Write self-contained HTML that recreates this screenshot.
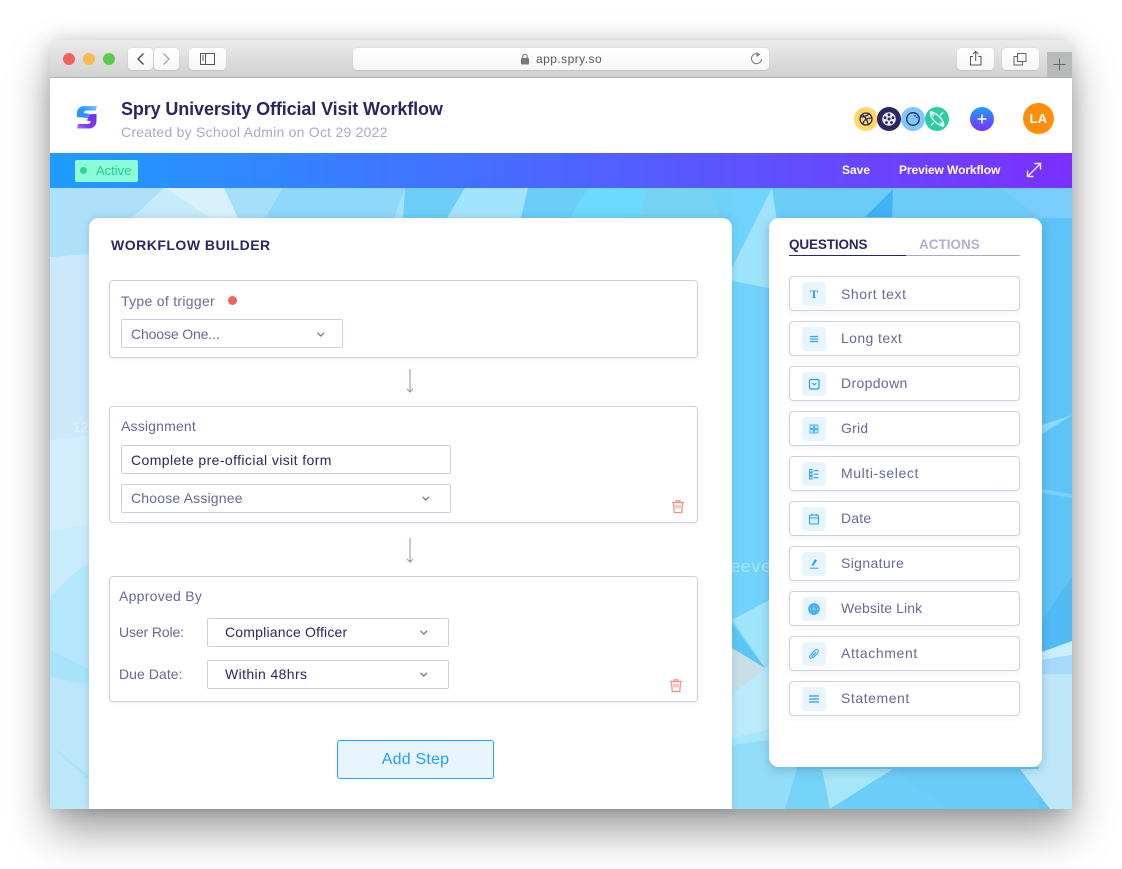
<!DOCTYPE html>
<html lang="en"><head><meta charset="utf-8"><title>Spry</title>
<style>
html,body{margin:0;padding:0;background:#fff}
body{width:1122px;height:869px;overflow:hidden;position:relative;font-family:"Liberation Sans",sans-serif}
.t{position:absolute;white-space:nowrap;line-height:20px;height:20px}
.win{position:absolute;left:50px;top:40px;width:1022px;height:769px;border-radius:6px;box-shadow:0 22px 44px rgba(0,0,0,.38),0 0 18px rgba(0,0,0,.14)}
.abs{position:absolute}
.tb{position:absolute;left:50px;top:40px;width:1022px;height:38px;background:linear-gradient(#ebebeb,#d1d1d1);border-radius:6px 6px 0 0;border-bottom:1px solid #b0b0b0;box-sizing:border-box;overflow:hidden}
.dot{position:absolute;width:12px;height:12px;border-radius:50%;top:53px}
.btn{position:absolute;top:48px;height:22px;background:linear-gradient(#fff,#f6f6f6);border-radius:4px;box-shadow:0 0 1px rgba(0,0,0,.2),0 1px 0 rgba(0,0,0,.06)}
.box{position:absolute;left:109px;width:589px;box-sizing:border-box;border:1px solid #cfcfe2;border-radius:4px;background:#fff;box-shadow:0 2px 5px rgba(60,60,120,.06)}
.sel{position:absolute;box-sizing:border-box;border:1px solid #cfcfe2;border-radius:2px;background:#fff;height:29px}
.lab{font-size:14px;color:#666a96;letter-spacing:.18px}
.dark{font-size:14px;color:#2a2760;letter-spacing:.25px}
.item{position:absolute;left:789px;width:231px;height:35px;box-sizing:border-box;border:1px solid #cfcfe2;border-radius:4px;background:#fff;box-shadow:0 3px 6px rgba(60,60,120,.04)}
.ic{position:absolute;left:802px;width:24px;height:24px;border-radius:4px;background:#e8f5ff}
.it{left:841px;font-size:14px;color:#666a96;letter-spacing:.36px}
svg{display:block}
</style></head><body>
<div class="win"></div>

<!-- low-poly background -->
<svg class="abs" style="left:50px;top:188px" width="1022" height="621" viewBox="50 188 1022 621">
<defs><linearGradient id="bg" x1="0" y1="0" x2="1" y2="0"><stop offset="0" stop-color="#b9e6fb"/><stop offset=".2" stop-color="#9fdffa"/><stop offset=".6" stop-color="#74d8fb"/><stop offset="1" stop-color="#5fc4f7"/></linearGradient></defs>
<rect x="50" y="188" width="1022" height="621" fill="url(#bg)"/>
<polygon points="50,188 164,188 132,220 90,260 50,257" fill="#aee0f9"/>
<polygon points="50,257 140,250 120,480 50,440" fill="#cbe9fb"/>
<polygon points="50,440 140,430 130,530 50,530" fill="#d2eefc"/>
<polygon points="50,530 130,520 132,566 82,566 50,597" fill="#c8ecfc"/>
<polygon points="50,597 82,566 130,600 130,690 50,650" fill="#b4e7fc"/>
<polygon points="50,650 130,690 50,677" fill="#a8e4f9"/>
<polygon points="50,677 130,700 130,809 50,809" fill="#bbe7f9"/>
<polygon points="50,745 88,775 130,740 130,760 88,780" fill="#a9e4f8"/>
<polygon points="164,188 224,188 238,218 132,218" fill="#c8ebfb"/>
<polygon points="165,188 224,188 238,218 210,218" fill="#d8f1fc"/>
<polygon points="224,188 283,188 265,218 238,218" fill="#a6dff9"/>
<polygon points="283,188 405,188 394,218 265,218" fill="#8ed8fb"/>
<polygon points="405,188 465,188 447,218 403,218" fill="#6dcef8"/>
<polygon points="405,188 403,218 394,218" fill="#a8e2fa"/>
<polygon points="465,188 528,188 521,218 447,218" fill="#a2e3fe"/>
<polygon points="528,188 588,188 570,218 521,218" fill="#6acef8"/>
<polygon points="588,188 648,188 639,218 570,218" fill="#6cd9fe"/>
<polygon points="648,188 710,188 720,218 639,218" fill="#76d2f3"/>
<polygon points="710,188 772,188 772,218 720,218" fill="#6fd0f8"/>
<rect x="732" y="188" width="40" height="440" fill="#70d3fb"/>
<polygon points="772,188 732,268 732,281 769,288 777,220" fill="#9fe2fb"/>
<polygon points="772,188 1072,188 1072,220 777,220" fill="#6dcbf8"/>
<polygon points="893,189 865,217 892,217" fill="#3fb2f2"/>
<polygon points="1000,188 1072,188 1072,218 1040,218" fill="#78cdfa"/>
<rect x="1042" y="218" width="30" height="425" fill="#5ec3f6"/>
<polygon points="1042,434 1072,415 1042,425" fill="#8fd9fa"/>
<polygon points="1042,489 1072,494 1072,498 1042,493" fill="#7ccff8"/>
<polygon points="1042,620 1072,577 1072,641 1042,652" fill="#52baf5"/>
<polygon points="1042,652 1072,641 1072,655 1042,660" fill="#c9eefc"/>
<polygon points="1042,660 1072,655 1072,674 1042,674" fill="#a6d9fb"/>
<polygon points="1042,674 1072,674 1072,809 1050,809 1020,769 1042,754" fill="#bee8f9"/>
<rect x="769" y="767" width="270" height="42" fill="#6acbf8"/>
<polygon points="797,769 822,769 830,809 785,809" fill="#76d3f8"/>
<polygon points="822,769 893,769 830,809" fill="#a6e6f8"/>
<polygon points="893,769 947,809 830,809" fill="#6ccdf9"/>
<polygon points="1020,769 1050,809 1072,809 1072,769" fill="#bee8f9"/>
<polygon points="732,620 769,600 769,666 765,668" fill="#a0e5fb"/>
<polygon points="732,624 765,668 732,648" fill="#5bc5f5"/>
<polygon points="732,648 765,668 732,694" fill="#c8dfe8"/>
<polygon points="765,668 769,666 769,730 732,738 732,694" fill="#bbeafb"/>
<polygon points="732,738 769,730 797,769 785,809 732,809" fill="#92defa"/>
<polygon points="732,738 769,730 769,740 732,745" fill="#a8e6fb"/>
</svg>
<div class="t" style="left:732px;top:557px;width:37px;overflow:hidden;font-size:17px;color:rgba(255,255,255,.4);font-family:'DejaVu Sans',sans-serif"><span style="margin-left:-2px">eeve</span></div>
<div class="t" style="left:73px;top:417px;font-size:14px;color:rgba(255,255,255,.4)">12</div>

<!-- title bar -->
<div class="tb"></div>
<div class="dot" style="left:63px;background:#f4625c"></div>
<div class="dot" style="left:83px;background:#f6bc4f"></div>
<div class="dot" style="left:103px;background:#5fc84f"></div>
<div class="btn" style="left:128px;width:25px"><svg width="25" height="22"><path d="M15.5 5.5 10 11l5.5 5.5" fill="none" stroke="#4a4a4a" stroke-width="1.4"/></svg></div>
<div class="btn" style="left:154px;width:25px"><svg width="25" height="22"><path d="M9.500 5.500 15 11l-5.500 5.500" fill="none" stroke="#aaa" stroke-width="1.4"/></svg></div>
<div class="btn" style="left:189px;width:37px"><svg width="37" height="22"><rect x="11.500" y="5.500" width="14" height="11" fill="none" stroke="#555"/><path d="M16.500 5.500v11M13 8h2M13 10h2M13 12h2" fill="none" stroke="#555"/></svg></div>
<div class="btn" style="left:353px;width:416px"></div>
<svg class="abs" style="left:520px;top:53px" width="10" height="12"><rect x="1" y="5" width="8" height="6.500" rx="1" fill="#777"/><path d="M2.800 5V3.500a2.200 2.200 0 0 1 4.400 0V5" fill="none" stroke="#777" stroke-width="1.100"/></svg>
<div class="t" style="left:536px;top:49px;font-size:12px;color:#595959;letter-spacing:.45px">app.spry.so</div>
<svg class="abs" style="left:749px;top:51px" width="15" height="15"><path d="M10.800 3.900A5 5 0 1 0 12.500 8" fill="none" stroke="#777" stroke-width="1"/><path d="M7.500 1 11 3.600 7.500 6z" fill="#777"/></svg>
<div class="btn" style="left:957px;width:37px"><svg width="37" height="22"><path d="M16 8.500h-2.500V17h10.500V8.500h-2.500M18.700 13V3.500M16.200 6l2.500-2.500L21.200 6" fill="none" stroke="#555" stroke-width="1"/></svg></div>
<div class="btn" style="left:1002px;width:37px"><svg width="37" height="22"><path d="M15.500 8.500h-3.500v8.500h8.500v-3M15.500 5.500h8.500v8h-8.500z" fill="none" stroke="#666" stroke-width="1"/></svg></div>
<div class="abs" style="left:1047px;top:52px;width:25px;height:25px;background:#b9bbba"><svg width="25" height="25"><path d="M12.500 6.500v12M6.500 12.500h12" stroke="#666" stroke-width="1"/></svg></div>

<!-- header -->
<div class="abs" style="left:50px;top:78px;width:1022px;height:75px;background:#fff"></div>
<svg class="abs" style="left:76px;top:105px" width="22" height="25" viewBox="0 0 22 25">
<defs>
<linearGradient id="lg" x1="1" y1="0" x2="0" y2="1"><stop offset="0" stop-color="#7fd0ff"/><stop offset=".45" stop-color="#2a9dff"/><stop offset="1" stop-color="#1e8fff"/></linearGradient>
<linearGradient id="lp" x1="1" y1="0" x2="0" y2="1"><stop offset="0" stop-color="#6a2ff0"/><stop offset=".7" stop-color="#7f3ff5"/><stop offset="1" stop-color="#a878fb"/></linearGradient>
</defs>
<path d="M8.500 1H21l-1.300 4.500H10.500C8.800 5.500 8 6.500 8 8l5 .6-1.500 4.400L1 12V8c0-4 3.300-7 7.500-7z" fill="url(#lg)"/>
<path d="M13 9.200 20.500 9v7c0 4-3 7.500-7.500 7.500H1l1-4.500h9.500c2 0 3-1 3-2.800l-3.500-.5z" fill="url(#lp)"/>
</svg>
<div class="t" style="left:121px;top:99px;font-size:18px;font-weight:bold;color:#2a2760;letter-spacing:-.12px">Spry University Official Visit Workflow</div>
<div class="t" style="left:121px;top:122px;font-size:14px;color:#a9a8c6;letter-spacing:.24px">Created by School Admin on Oct 29 2022</div>

<svg class="abs" style="left:850px;top:103px" width="100" height="32" viewBox="850 103 100 32">
<circle cx="866" cy="119" r="12" fill="#ffd966"/>
<g fill="none" stroke="#2a2760" stroke-width="1.300"><circle cx="866" cy="119" r="6"/><path d="M860.500 117c3 0 7-1 9-4M862 114c3 3 6 7 6 10.500M863 124c.5-4 4-6 9-6"/></g>
<circle cx="889" cy="119" r="12" fill="#2a2760"/>
<circle cx="889" cy="119" r="6.800" fill="#e9e9f3"/>
<g fill="#2a2760"><circle cx="889" cy="119" r="1.500"/><circle cx="889" cy="114.800" r="1.400"/><circle cx="893" cy="117.700" r="1.400"/><circle cx="891.500" cy="122.500" r="1.400"/><circle cx="886.500" cy="122.500" r="1.400"/><circle cx="885" cy="117.700" r="1.400"/></g>
<circle cx="913" cy="119" r="12" fill="#80c8fb"/>
<circle cx="913" cy="119" r="6.300" fill="none" stroke="#2a2760" stroke-width="1.300"/>
<circle cx="915" cy="115.800" r=".8" fill="#2a2760"/><circle cx="917" cy="117.500" r=".8" fill="#2a2760"/>
<circle cx="937" cy="119" r="12" fill="#2bcda5"/>
<g fill="none" stroke="#fff" stroke-width="1.300"><ellipse cx="937" cy="119" rx="3.300" ry="8.500" transform="rotate(-45 937 119)"/><path d="M931 113l3 3M940 122l3.500 3.500M943 112.500l-3 3M934 122.500l-3 3"/><circle cx="931.500" cy="113" r="1.200"/><circle cx="942.500" cy="125" r="1.200"/></g>
</svg>
<div class="abs" style="left:970px;top:107px;width:24px;height:24px;border-radius:50%;background:linear-gradient(#1e9eff,#7b2fff)"><svg width="24" height="24"><path d="M12 7.500v9M7.500 12h9" stroke="#fff" stroke-width="1.500"/></svg></div>
<div class="abs" style="left:1023px;top:103px;width:31px;height:31px;border-radius:50%;background:#ff8f0a;color:#fff;font-size:13px;font-weight:bold;line-height:31px;text-align:center;letter-spacing:.3px">LA</div>

<!-- gradient bar -->
<div class="abs" style="left:50px;top:153px;width:1022px;height:35px;background:linear-gradient(90deg,#1e9cff,#7b2ffe)"></div>
<div class="abs" style="left:75px;top:160px;width:63px;height:22px;background:#8dfbd6;border-radius:2px"></div>
<div class="abs" style="left:80px;top:167px;width:7px;height:7px;border-radius:50%;background:#2bd3a0"></div>
<div class="t" style="left:96px;top:161px;font-size:13px;color:#1fcd9c;letter-spacing:0">Active</div>
<div class="t" style="left:842px;top:160px;font-size:12px;font-weight:bold;color:#fff">Save</div>
<div class="t" style="left:899px;top:160px;font-size:12px;font-weight:bold;color:#fff;letter-spacing:-.08px">Preview Workflow</div>
<svg class="abs" style="left:1026px;top:162px" width="16" height="16"><path d="M1.500 14.500 14.500 1.500M8.500 1.500h6v6M1.500 8.500v6h6" fill="none" stroke="#f0eaff" stroke-width="1.400"/></svg>

<!-- left card -->
<div class="abs" style="left:89px;top:218px;width:643px;height:591px;background:#fff;border-radius:10px 10px 0 0;box-shadow:0 0 8px rgba(80,110,140,.25)"></div>
<div class="t" style="left:111px;top:235px;font-size:14px;font-weight:bold;color:#2a2760;letter-spacing:.5px">WORKFLOW BUILDER</div>

<div class="box" style="top:280px;height:78px"></div>
<div class="t lab" style="left:121px;top:291px;letter-spacing:.3px">Type of trigger</div>
<div class="abs" style="left:228px;top:296px;width:9px;height:9px;border-radius:50%;background:#f0635f"></div>
<div class="sel" style="left:121px;top:319px;width:222px"></div>
<div class="t lab" style="left:131px;top:324px;letter-spacing:-.13px">Choose One...</div>
<svg class="abs" style="left:316px;top:331px" width="10" height="8"><path d="M1.500 1.800 4.800 5 8 1.800" fill="none" stroke="#6a6d95" stroke-width="1.200"/></svg>

<svg class="abs" style="left:404px;top:368px" width="12" height="26"><path d="M6 1v23M3 21 6 24l3-3" fill="none" stroke="#8e90b5" stroke-width="1"/></svg>

<div class="box" style="top:406px;height:117px"></div>
<div class="t lab" style="left:121px;top:416px">Assignment</div>
<div class="sel" style="left:121px;top:445px;width:330px"></div>
<div class="t dark" style="left:131px;top:450px;letter-spacing:.4px">Complete pre-official visit form</div>
<div class="sel" style="left:121px;top:484px;width:330px"></div>
<div class="t lab" style="left:131px;top:488px">Choose Assignee</div>
<svg class="abs" style="left:421px;top:495px" width="10" height="8"><path d="M1.500 1.800 4.800 5 8 1.800" fill="none" stroke="#6a6d95" stroke-width="1.200"/></svg>
<svg class="abs" style="left:671px;top:499px" width="14" height="15"><path d="M1 3.500h12M5 3.500V1.800h4v1.700M2.500 3.500l.7 10h7.600l.7-10" fill="none" stroke="#f48a85" stroke-width="1.200"/><rect x="4" y="6" width="6" height="3.500" fill="#fbc4c1"/></svg>

<svg class="abs" style="left:404px;top:537px" width="12" height="27"><path d="M6 1v24M3 22 6 25l3-3" fill="none" stroke="#8e90b5" stroke-width="1"/></svg>

<div class="box" style="top:576px;height:126px"></div>
<div class="t lab" style="left:119px;top:586px;letter-spacing:.27px">Approved By</div>
<div class="t lab" style="left:119px;top:622px;letter-spacing:-.12px">User Role:</div>
<div class="sel" style="left:207px;top:618px;width:242px"></div>
<div class="t dark" style="left:225px;top:622px;letter-spacing:.2px">Compliance Officer</div>
<svg class="abs" style="left:419px;top:629px" width="10" height="8"><path d="M1.500 1.800 4.800 5 8 1.800" fill="none" stroke="#6a6d95" stroke-width="1.200"/></svg>
<div class="t lab" style="left:119px;top:664px;letter-spacing:.06px">Due Date:</div>
<div class="sel" style="left:207px;top:660px;width:242px"></div>
<div class="t dark" style="left:225px;top:664px;letter-spacing:.38px">Within 48hrs</div>
<svg class="abs" style="left:419px;top:671px" width="10" height="8"><path d="M1.500 1.800 4.800 5 8 1.800" fill="none" stroke="#6a6d95" stroke-width="1.200"/></svg>
<svg class="abs" style="left:669px;top:678px" width="14" height="15"><path d="M1 3.500h12M5 3.500V1.800h4v1.700M2.500 3.500l.7 10h7.600l.7-10" fill="none" stroke="#f48a85" stroke-width="1.200"/><rect x="4" y="6" width="6" height="3.500" fill="#fbc4c1"/></svg>

<div class="abs" style="left:337px;top:740px;width:157px;height:39px;box-sizing:border-box;background:#e8f5ff;border:1px solid #1ea5f8;border-radius:3px;color:#1ea5f8;font-size:16px;line-height:38px;text-align:center;letter-spacing:.2px">Add Step</div>

<!-- right card -->
<div class="abs" style="left:769px;top:218px;width:273px;height:549px;background:#fff;border-radius:10px;box-shadow:0 3px 10px rgba(40,80,120,.28)"></div>
<div class="t" style="left:789px;top:235px;font-size:13.5px;font-weight:bold;color:#2a2760;letter-spacing:-.12px">QUESTIONS</div>
<div class="t" style="left:919px;top:235px;font-size:13.5px;font-weight:bold;color:#b2b1cb;letter-spacing:0">ACTIONS</div>
<div class="abs" style="left:789px;top:255px;width:117px;height:1px;background:#2a2760"></div>
<div class="abs" style="left:906px;top:255px;width:114px;height:1px;background:#a9a8c6"></div>

<div class="item" style="top:276px"></div><div class="ic" style="top:282px"><div style="font:bold 12px/24px 'Liberation Serif',serif;color:#1e9eff;text-align:center">T</div></div><div class="t it" style="top:284px;letter-spacing:.56px">Short text</div>
<div class="item" style="top:321px"></div><div class="ic" style="top:327px"><svg width="24" height="24"><path d="M8 9.500h8M8 12h8M8 14.500h8" stroke="#2aa5ff" stroke-width="1.300"/></svg></div><div class="t it" style="top:328px;letter-spacing:.4px">Long text</div>
<div class="item" style="top:366px"></div><div class="ic" style="top:372px"><svg width="24" height="24"><rect x="7.500" y="7.500" width="9.500" height="9.500" rx="1.500" fill="none" stroke="#1e9eff" stroke-width="1.200"/><path d="M10.300 11l2 2 2-2" fill="none" stroke="#1e9eff" stroke-width="1.100"/></svg></div><div class="t it" style="top:373px">Dropdown</div>
<div class="item" style="top:411px"></div><div class="ic" style="top:417px"><svg width="24" height="24"><path d="M8 8h3.500v3.500H8zM12.500 8H16v3.500h-3.500zM8 12.500h3.500V16H8zM12.500 12.500H16V16h-3.500z" fill="#c5e6ff" stroke="#4db5ff" stroke-width=".9"/></svg></div><div class="t it" style="top:418px;letter-spacing:.2px">Grid</div>
<div class="item" style="top:456px"></div><div class="ic" style="top:462px"><svg width="24" height="24"><path d="M7.500 7.500h2.500V10H7.500zM7.500 11h2.500v2.500H7.500zM7.500 14.500h2.500V17H7.500z" fill="none" stroke="#2aa5ff" stroke-width=".9"/><path d="M11.500 8.700h5M11.500 12.200h5M11.500 15.700h5" stroke="#2aa5ff" stroke-width="1.200"/></svg></div><div class="t it" style="top:463px;letter-spacing:.6px">Multi-select</div>
<div class="item" style="top:501px"></div><div class="ic" style="top:507px"><svg width="24" height="24"><rect x="7.500" y="8" width="9" height="9" rx="1" fill="#d8efff" stroke="#2aa5ff" stroke-width="1.100"/><path d="M7.500 11h9M9.800 6.800V9M14.200 6.800V9" stroke="#2aa5ff" stroke-width="1.100"/></svg></div><div class="t it" style="top:508px;letter-spacing:.2px">Date</div>
<div class="item" style="top:546px"></div><div class="ic" style="top:552px"><svg width="24" height="24"><path d="M12.800 7 15 8.500 11.500 13.500 9.300 14z" fill="#2aa5ff"/><path d="M8 16.200h8.500" stroke="#2aa5ff" stroke-width="1"/></svg></div><div class="t it" style="top:553px">Signature</div>
<div class="item" style="top:591px"></div><div class="ic" style="top:597px"><svg width="24" height="24"><circle cx="12" cy="12" r="5.300" fill="#7fc8fd" stroke="#2aa5ff" stroke-width="1"/><ellipse cx="12" cy="12" rx="2.300" ry="5.300" fill="none" stroke="#1e9cff" stroke-width=".8"/><path d="M7 10h10M7 14h10" stroke="#1e9cff" stroke-width=".8"/></svg></div><div class="t it" style="top:598px;letter-spacing:.11px">Website Link</div>
<div class="item" style="top:636px"></div><div class="ic" style="top:642px"><svg width="24" height="24"><path d="M9.500 16.500c-1.800 0-2.300-2-1.200-3.300l4.700-4.900c1.300-1.300 3.500-.6 3.300 1.100-.1.700-.4 1.200-.8 1.700l-4 4.100c-.8.700-2 0-1.500-1l3.900-4" fill="none" stroke="#2aa5ff" stroke-width="1.100"/></svg></div><div class="t it" style="top:643px;letter-spacing:.6px">Attachment</div>
<div class="item" style="top:681px"></div><div class="ic" style="top:687px"><svg width="24" height="24"><path d="M7 9h10M7 12h10M7 15h10" stroke="#1e9eff" stroke-width="1.200"/></svg></div><div class="t it" style="top:688px;letter-spacing:.56px">Statement</div>

</body></html>
